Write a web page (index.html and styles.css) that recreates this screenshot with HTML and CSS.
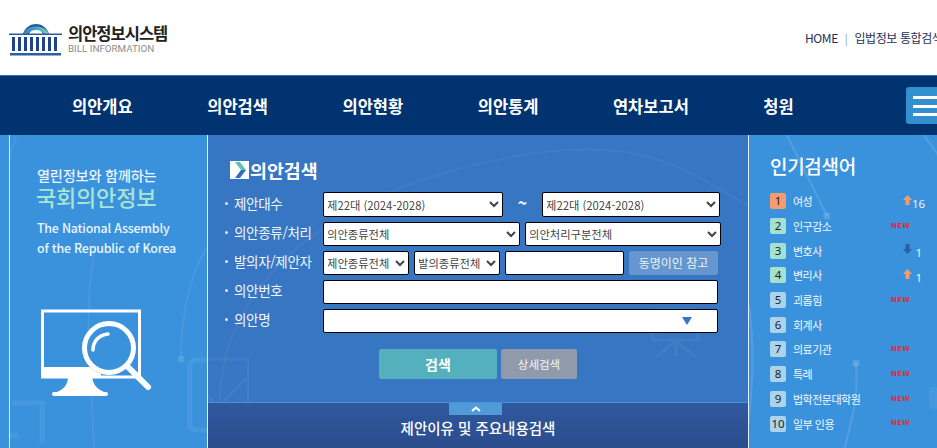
FILE: index.html
```html
<!DOCTYPE html>
<html lang="ko">
<head>
<meta charset="utf-8">
<title>의안정보시스템</title>
<link rel="stylesheet" href="styles.css">
</head>
<body>
<div class="page">
  <header class="top">
    <a class="logo">
      <svg class="logo-mark" width="54" height="34" viewBox="0 0 54 34">
        <defs><linearGradient id="dome" x1="0" x2="1"><stop offset="0" stop-color="#3f7fc2"/><stop offset=".55" stop-color="#4aa6c0"/><stop offset="1" stop-color="#7fd0b0"/></linearGradient></defs>
        <path d="M14 11C16 4 22 1 27 1s11 3 13 10h-6c-1-3-4-5-7-5s-6 2-7 5z" fill="#1f5a9c"/>
        <path d="M14 11C16 6 21 3.500 27 3.500S38 6 40 11h-5c-1.500-3-4.500-4-8-4s-6.500 1-8 4z" fill="url(#dome)"/>
        <path d="M0 10.500h53v1.500H0z" fill="#2a5a9c"/>
        <path d="M3 14h3v14H3zM9 14h3v14H9zM15 14h3v14h-3zM21 14h3v14h-3zM27 14h3v14h-3zM33 14h3v14h-3zM39 14h3v14h-3zM45 14h3v14h-3z" fill="#1d4489"/>
        <path d="M1 30h51v2.500H1z" fill="#2d5ea6"/>
      </svg>
      <span class="logo-text">
        <strong class="logo-title">의안정보시스템</strong>
        <span class="logo-sub">BILL INFORMATION</span>
      </span>
    </a>
    <div class="util"><a>HOME</a><i class="util-sep">|</i><a>입법정보 통합검색</a></div>
  </header>

  <nav class="gnb">
    <a>의안개요</a><a>의안검색</a><a>의안현황</a><a>의안통계</a><a>연차보고서</a><a>청원</a>
    <button class="menu-btn" type="button" aria-label="전체메뉴"><span></span><span></span><span></span></button>
  </nav>

  <main class="main">
    <aside class="intro">
      <svg class="decor" width="198" height="313" viewBox="0 0 198 313">
        <g fill="none" stroke="#fff" stroke-opacity=".07" stroke-width="2">
          <path d="M8 0C4 12 0 24-9 38"/>
          <path d="M87 110C72 170 84 260 85 313"/>
          <path d="M172 224C172 170 185 130 200 110"/>
          <rect x="181" y="225" width="30" height="70" rx="6" stroke-width="5"/>
          <path d="M3 268h30v40M-5 300h14" stroke-width="5"/>
        </g>
        <circle cx="172" cy="224" r="3.500" fill="#fff" fill-opacity=".13"/>
      </svg>
      <div class="intro-copy">
        <p class="intro-lead">열린정보와 함께하는</p>
        <p class="intro-name">국회의안정보</p>
        <p class="intro-en">The National Assembly<br>of the Republic of Korea</p>
      </div>
      <svg class="intro-icon" width="112" height="90" viewBox="0 0 112 90">
        <path d="M2.500 2h97v66h-97z" fill="none" stroke="#fff" stroke-width="3"/>
        <path d="M1 58h60v9H1z" fill="#fff"/>
        <path d="M28 67h24c1 9 5 13 12 16H17c7-3 11-7 11-16z" fill="#fff"/>
        <path d="M14 83h52a2 2 0 0 1 0 4H14a2 2 0 0 1 0-4z" fill="#fff"/>
        <circle cx="69" cy="39" r="27" fill="#3a92dd"/>
        <circle cx="69" cy="39" r="24.500" fill="none" stroke="#fff" stroke-width="5"/>
        <path d="M53 41c0-9 6-15 15-16" fill="none" stroke="#fff" stroke-width="3.500" stroke-linecap="round"/>
        <path d="M87 57l21 21" fill="none" stroke="#fff" stroke-width="6" stroke-linecap="round"/>
      </svg>
    </aside>

    <section class="search">
      <svg class="decor" width="540" height="313" viewBox="0 0 540 313">
        <g fill="none" stroke="#fff" stroke-opacity=".05" stroke-width="2">
          <path d="M22 313C-10 240 30 100 230 40S480 40 540 70"/>
          <rect x="-20" y="224" width="60" height="60" stroke-width="3"/>
          <path d="M-10 250l20 22 28-28" stroke-width="3"/>
          <path d="M445 175h45v30h-45zM468 205v16M448 222l20-16 20 16M452 198l14-12 10 6 10-10" stroke-width="3"/>
        </g>
      </svg>
      <h2 class="search-title"><svg class="title-mark" width="19" height="18" viewBox="0 0 19 18"><path d="M0 0h19v18H0z" fill="#fff"/><path d="M5 1h5l6 8H11z" fill="#5cc4b4"/><path d="M11 9h5l-6 8H5z" fill="#2f6fbd"/></svg>의안검색</h2>

      <div class="form">
        <div class="row">
          <label class="lbl">제안대수</label>
          <select class="fld w180"><option>제22대 (2024-2028)</option></select>
          <span class="tilde">~</span>
          <select class="fld w178"><option>제22대 (2024-2028)</option></select>
        </div>
        <div class="row">
          <label class="lbl">의안종류/처리</label>
          <select class="fld w197"><option>의안종류전체</option></select>
          <select class="fld w196 gap5"><option>의안처리구분전체</option></select>
        </div>
        <div class="row">
          <label class="lbl">발의자/제안자</label>
          <select class="fld w86"><option>제안종류전체</option></select>
          <select class="fld w86 gap5"><option>발의종류전체</option></select>
          <input class="fld w119 gap5" type="text">
          <button class="same" type="button">동명이인 참고</button>
        </div>
        <div class="row">
          <label class="lbl">의안번호</label>
          <input class="fld w395" type="text">
        </div>
        <div class="row">
          <label class="lbl">의안명</label>
          <div class="fld w395 combo"><i class="combo-arrow"></i></div>
        </div>
      </div>

      <div class="actions">
        <button class="btn-go" type="button">검색</button>
        <button class="btn-more" type="button">상세검색</button>
      </div>

      <div class="reason">
        <span class="reason-tab"><svg width="10" height="6" viewBox="0 0 10 6"><path d="M1 5l4-3.500L9 5" fill="none" stroke="#fff" stroke-width="2"/></svg></span>
        <strong class="reason-text">제안이유 및 주요내용검색</strong>
      </div>
    </section>

    <aside class="rank">
      <svg class="decor" width="189" height="313" viewBox="0 0 189 313">
        <g fill="none" stroke="#fff" stroke-opacity=".12" stroke-width="2">
          <path d="M38 0l40 81"/>
          <path d="M107 228C110 270 100 290 96 313"/>
          <path d="M0 170C8 230 0 280-3 313"/>
          <path d="M175 0l14 20"/>
        </g>
        <circle cx="78" cy="81" r="3.500" fill="#fff" fill-opacity=".16"/>
        <circle cx="107" cy="228" r="3.500" fill="#fff" fill-opacity=".16"/>
        <rect x="180" y="252" width="20" height="22" rx="4" fill="#fff" fill-opacity=".06"/>
      </svg>
      <h2 class="rank-title">인기검색어</h2>
      <ol class="rank-list">
        <li class="item"><b class="no hot">1</b><span class="word">여성</span><span class="trend"><svg class="arr" width="9" height="10" viewBox="0 0 9 10"><path d="M4.500 0L9 5H6.500v5h-4V5H0z" fill="#f79a6d"/></svg><em class="num">16</em></span></li>
        <li class="item"><b class="no mint">2</b><span class="word">인구감소</span><span class="new">NEW</span></li>
        <li class="item"><b class="no mint">3</b><span class="word">변호사</span><span class="trend"><svg class="arr" width="9" height="10" viewBox="0 0 9 10"><path d="M4.500 10L9 5H6.500V0h-4v5H0z" fill="#2f5da6"/></svg><em class="num one">1</em></span></li>
        <li class="item"><b class="no mint">4</b><span class="word">변리사</span><span class="trend"><svg class="arr" width="9" height="10" viewBox="0 0 9 10"><path d="M4.500 0L9 5H6.500v5h-4V5H0z" fill="#f79a6d"/></svg><em class="num one">1</em></span></li>
        <li class="item"><b class="no sky">5</b><span class="word">괴롭힘</span><span class="new">NEW</span></li>
        <li class="item"><b class="no sky">6</b><span class="word">회계사</span></li>
        <li class="item"><b class="no sky">7</b><span class="word">의료기관</span><span class="new">NEW</span></li>
        <li class="item"><b class="no sky">8</b><span class="word">특례</span><span class="new">NEW</span></li>
        <li class="item"><b class="no sky">9</b><span class="word">법학전문대학원</span><span class="new">NEW</span></li>
        <li class="item"><b class="no sky">10</b><span class="word">일부 인용</span><span class="new">NEW</span></li>
      </ol>
    </aside>
  </main>
</div>
</body>
</html>
```

FILE: styles.css
```css
* { box-sizing: border-box; }
html, body { margin: 0; padding: 0; height: 448px; overflow: hidden; background: #fff; }
body { font-family: "Noto Sans CJK KR", "Noto Sans", sans-serif; color: #333; }
p, h2, ol { margin: 0; padding: 0; }
em, i { font-style: normal; }
.page { width: 1000px; }

/* header */
.top { height: 75px; display: flex; align-items: flex-start; justify-content: space-between; }
.logo { display: flex; align-items: flex-start; margin: 23px 0 0 9px; }
.logo-mark { display: block; }
.logo-text { display: flex; flex-direction: column; margin-left: 5px; }
.logo-title { font-size: 16.500px; line-height: 20px; font-weight: 700; color: #222; letter-spacing: -1px; }
.logo-sub { font-family: Roboto, sans-serif; font-size: 9.800px; line-height: 11px; margin-top: 0; color: #8c8c8c; }
.util { width: 195px; margin-top: 29px; font-size: 12px; line-height: 18px; color: #1f2f55; white-space: nowrap; display: flex; letter-spacing: -.4px; }
.util-sep { margin: 0 7px; color: #7fa8cc; font-size: 11px; }

/* gnb */
.gnb { height: 60px; background: #00336f; border-top: 1px solid #2f6fb0; display: flex; align-items: center; padding-left: 72px; }
.gnb a { color: #fff; font-size: 16.500px; font-weight: 700; line-height: 20px; margin-right: 74.500px; white-space: nowrap; }
.menu-btn { width: 50px; height: 37px; margin-left: 38px; padding: 9px 0 0 7px; border: 0; border-radius: 3px; background: #338fd0; display: flex; flex-direction: column; gap: 5.500px; flex: none; }
.menu-btn span { display: block; width: 100%; height: 3px; background: #fff; flex: none; }

/* main */
.main { height: 313px; display: flex; }
.decor { position: absolute; left: 0; top: 0; pointer-events: none; }
.intro { position: relative; width: 207px; flex: none; background: #3a92dd; border-left: 9px solid #3a92dd; overflow: hidden; }
.intro::before { content: ""; position: absolute; left: 0; top: 0; bottom: 0; width: 1px; background: #dcecfa; }
.intro-copy { position: relative; padding: 31px 0 0 28px; color: #fff; }
.intro-lead { font-size: 14.200px; line-height: 18px; color: #eaf5fd; letter-spacing: -.2px; font-weight: 500; }
.intro-name { font-size: 22px; line-height: 24px; color: #a9e4d2; letter-spacing: -.2px; margin-left: -1px; font-weight: 500; }
.intro-en { font-size: 12.400px; line-height: 20px; margin-top: 10px; color: #eaf5fd; letter-spacing: -.2px; font-weight: 500; }
.intro-icon { position: relative; display: block; margin: 51px 0 0 31px; }

.search { position: relative; width: 542px; flex: none; background: #3676c2; border-left: 1px solid #e6f0fa; border-right: 1px solid #e6f0fa; overflow: hidden; display: flex; flex-direction: column; }
.search-title { position: relative; display: flex; align-items: center; height: 22px; margin: 24px 0 0 22px; color: #fff; font-size: 18.400px; font-weight: 700; line-height: 22px; }
.title-mark { display: block; margin-right: 1px; flex: none; }
.form { position: relative; margin: 11px 0 0 15px; }
.row { display: flex; align-items: center; height: 25px; margin-bottom: 4px; }
.lbl { width: 100px; flex: none; margin-bottom: 3px; padding-left: 11px; position: relative; color: #f1f6fc; font-size: 13.500px; line-height: 18px; white-space: nowrap; letter-spacing: -.3px; }
.lbl::before { content: ""; position: absolute; left: 2px; top: 8px; width: 3px; height: 3px; border-radius: 50%; background: #dbe8f6; }
.fld { height: 24px; border: 1px solid #000; border-radius: 2px; background: #fff; color: #444; font-family: "Noto Sans CJK KR", "Noto Sans", sans-serif; font-size: 11.300px; padding: 0; display: block; flex: none; }
select.fld { text-indent: -1px; }
.w180 { width: 180px; height: 25px; }
.w178 { width: 178px; height: 25px; }
.w197 { width: 197px; }
.w196 { width: 196px; }
.w86 { width: 86px; }
.w119 { width: 119px; }
.w395 { width: 395px; }
.gap5 { margin-left: 5px; }
.tilde { width: 39px; margin-bottom: 5px; text-align: center; color: #fff; font-size: 16px; font-weight: 700; line-height: 18px; flex: none; }
.same { width: 89px; height: 24px; margin-left: 5px; padding: 0; border: 0; border-radius: 2px; background: #6596ce; color: #edf4fb; font-family: inherit; font-size: 12px; }
.combo { position: relative; }
.combo-arrow { position: absolute; right: 25px; top: 7px; width: 0; height: 0; border-left: 5px solid transparent; border-right: 5px solid transparent; border-top: 8px solid #3676c2; }

.actions { position: relative; display: flex; margin: 12px 0 0 171px; gap: 4px; }
.btn-go { width: 118px; height: 30px; padding: 0; border: 0; border-radius: 2px; background: #55b0bd; color: #fff; font-family: inherit; font-size: 14px; font-weight: 700; }
.btn-more { width: 76px; height: 30px; padding: 0; border: 0; border-radius: 2px; background: #8f9bab; color: #f3f5f8; font-family: inherit; font-size: 11.500px; }
.reason { position: relative; height: 47px; margin-top: 23px; border-top: 1px solid #4a90d8; background: linear-gradient(#30599f, #2a4c8b); text-align: center; }
.reason-tab { position: absolute; left: 241px; top: 0; width: 53px; height: 12px; background: #4f9ad7; display: flex; align-items: center; justify-content: center; }
.reason-tab svg { display: block; }
.reason-text { display: block; padding-top: 14px; color: #fff; font-size: 14.500px; font-weight: 500; line-height: 22px; }

/* rank */
.rank { position: relative; flex: 1; background: #3a92dd; overflow: hidden; padding-left: 21px; }
.rank-title { position: relative; margin-top: 18px; color: #fff; font-size: 19px; font-weight: 500; line-height: 26px; letter-spacing: -.3px; }
.rank-list { position: relative; list-style: none; margin-top: 10px; }
.item { height: 24.700px; display: flex; align-items: center; position: relative; }
.no { width: 16px; height: 16px; border-radius: 2px; flex: none; color: #222; font-size: 11.500px; font-weight: 400; line-height: 16px; text-align: center; font-family: "Noto Sans", sans-serif; }
.hot { background: #f79a6d; }
.mint { background: #a5e1d0; }
.sky { background: #acd3ec; }
.word { margin-left: 7px; color: #f2f8fd; font-size: 11px; line-height: 16px; white-space: nowrap; letter-spacing: -.5px; }
.new { position: absolute; left: 121px; top: 8px; color: #d5303c; font-family: "DejaVu Sans", sans-serif; font-size: 7px; line-height: 9px; font-weight: 700; letter-spacing: .3px; }
.trend { position: absolute; left: 133px; top: 6px; width: 30px; display: flex; }
.arr { display: block; flex: none; }
.num { width: 12px; text-align: right; color: #eaf4fc; font-family: "Noto Sans", sans-serif; font-size: 11.500px; line-height: 14px; padding-top: 2px; }
.one { width: 10px; }
```
